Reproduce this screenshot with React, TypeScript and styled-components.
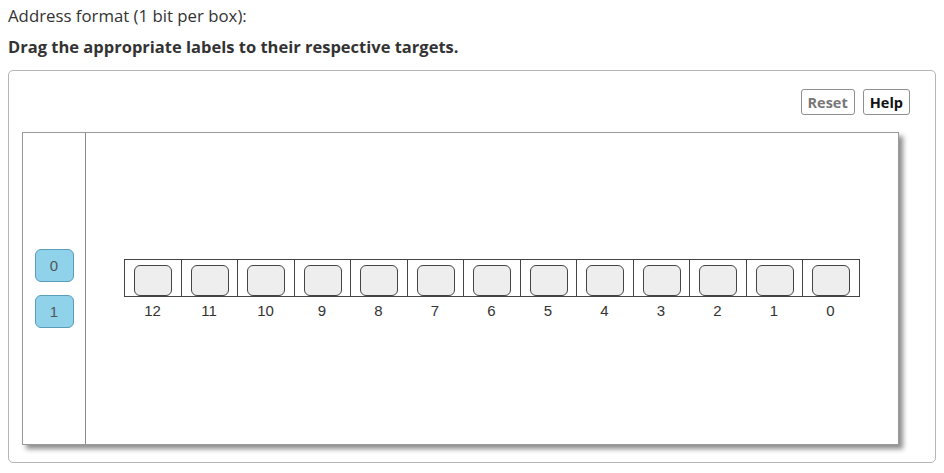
import React from "react";
import styled, { createGlobalStyle } from "styled-components";

const Global = createGlobalStyle`
  html, body { margin: 0; padding: 0; background: #fff; }
  body { font-family: "Open Sans", "Liberation Sans", sans-serif; color: #333; }
`;

const Page = styled.div`
  padding: 4px 8px 0 8px;
  width: 928px;
`;

const Intro = styled.p`
  margin: 0;
  font-size: 16.8px;
  line-height: 24px;
  color: #333;
`;

const Instruction = styled.p`
  margin: 7px 0 0 0;
  font-size: 16.5px;
  line-height: 24px;
  font-weight: 700;
  color: #333;
`;

const Panel = styled.div`
  margin-top: 11px;
  box-sizing: border-box;
  width: 928px;
  height: 393px;
  border: 1px solid #b5b5b5;
  border-radius: 5px;
  padding: 18px 25px 0 13px;
  display: flex;
  flex-direction: column;
`;

const Toolbar = styled.div`
  display: flex;
  justify-content: flex-end;
  gap: 8px;
`;

const ToolButton = styled.button<{ $muted?: boolean }>`
  box-sizing: border-box;
  height: 26px;
  padding: 0 6px;
  border: 1px solid #8f8f8f;
  border-radius: 3px;
  background: #fff;
  font-family: "Open Sans", "Liberation Sans", sans-serif;
  font-size: 14.5px;
  font-weight: 700;
  color: ${(p) => (p.$muted ? "#777" : "#111")};
`;

const Canvas = styled.div`
  margin-top: 17px;
  box-sizing: border-box;
  width: 877px;
  height: 313px;
  border: 1px solid #9a9a9a;
  box-shadow: 4px 4px 5px rgba(0, 0, 0, 0.45);
  display: flex;
  background: #fff;
`;

const Palette = styled.div`
  width: 63px;
  border-right: 1px solid #8a8a8a;
  display: flex;
  flex-direction: column;
  align-items: center;
  justify-content: center;
  gap: 13px;
  box-sizing: border-box;
`;

const Token = styled.div`
  box-sizing: border-box;
  width: 39px;
  height: 33px;
  border: 1px solid #5b9cbb;
  border-radius: 6px;
  background: #8fd2ea;
  display: flex;
  align-items: center;
  justify-content: center;
  font-family: "Liberation Sans", Arial, sans-serif;
  font-size: 15px;
  color: #555;
`;

const Stage = styled.div`
  flex: 1;
  display: flex;
  align-items: center;
  justify-content: center;
  padding-top: 2px;
`;

const BitRow = styled.div`
  display: flex;
  flex-direction: column;
`;

const Cells = styled.div`
  display: grid;
  grid-template-columns: repeat(13, 56.5px);
  border: 1px solid #444;
  border-right: none;
  height: 38px;
  box-sizing: border-box;
`;

const Cell = styled.div`
  border-right: 1px solid #444;
  display: flex;
  align-items: flex-end;
  justify-content: center;
`;

const Slot = styled.div`
  box-sizing: border-box;
  width: 38px;
  height: 31px;
  border: 1px solid #444;
  border-radius: 6px;
  background: #eeeeee;
`;

const Labels = styled.div`
  display: grid;
  grid-template-columns: repeat(13, 56.5px);
  margin-top: 5px;
`;

const Label = styled.div`
  text-align: center;
  font-family: "Liberation Sans", Arial, sans-serif;
  font-size: 15px;
  line-height: 18px;
  color: #333;
`;

const bits = [12, 11, 10, 9, 8, 7, 6, 5, 4, 3, 2, 1, 0];

export default function App() {
  return (
    <>
      <Global />
      <Page>
        <Intro>Address format (1 bit per box):</Intro>
        <Instruction>Drag the appropriate labels to their respective targets.</Instruction>
        <Panel>
          <Toolbar>
            <ToolButton $muted>Reset</ToolButton>
            <ToolButton>Help</ToolButton>
          </Toolbar>
          <Canvas>
            <Palette>
              <Token>0</Token>
              <Token>1</Token>
            </Palette>
            <Stage>
              <BitRow>
                <Cells>
                  {bits.map((b) => (
                    <Cell key={b}>
                      <Slot />
                    </Cell>
                  ))}
                </Cells>
                <Labels>
                  {bits.map((b) => (
                    <Label key={b}>{b}</Label>
                  ))}
                </Labels>
              </BitRow>
            </Stage>
          </Canvas>
        </Panel>
      </Page>
    </>
  );
}
